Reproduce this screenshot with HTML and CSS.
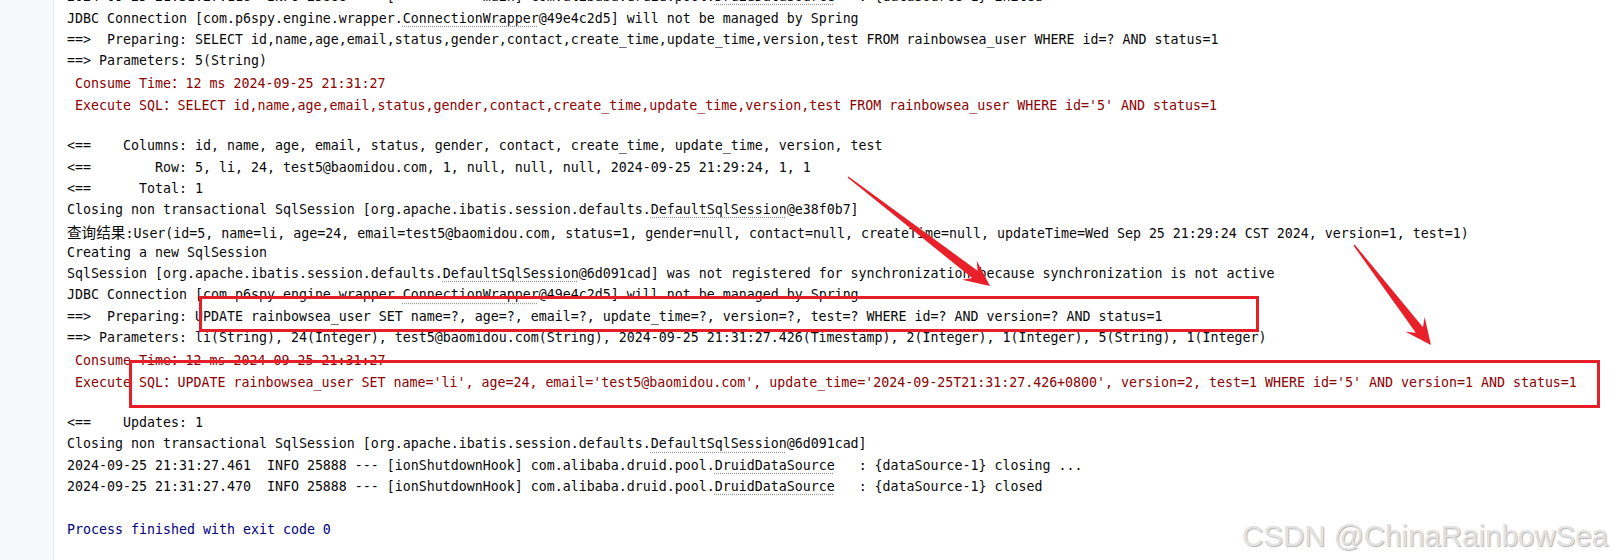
FILE: index.html
```html
<html>
  <head>
    <meta charset="utf-8" />
    <link rel="stylesheet" href="styles.css">
  </head>
  <body>
    <div class="page">
      <div class="gutter"></div>

      <div class="console">
        <div class="line">2024-09-25 21:31:27.118  INFO 25888 --- [           main] com.alibaba.druid.pool.<span class="link">DruidDataSource</span>   : {dataSource-1} inited</div>
        <div class="line">JDBC Connection [com.p6spy.engine.wrapper.<span class="link">ConnectionWrapper</span>@49e4c2d5] will not be managed by Spring</div>
        <div class="line">==>  Preparing: SELECT id,name,age,email,status,gender,contact,create_time,update_time,version,test FROM rainbowsea_user WHERE id=? AND status=1</div>
        <div class="line">==> Parameters: 5(String)</div>
        <div class="line err"> Consume Time<span class="cjk">：</span>12 ms 2024-09-25 21:31:27</div>
        <div class="line err"> Execute SQL<span class="cjk">：</span>SELECT id,name,age,email,status,gender,contact,create_time,update_time,version,test FROM rainbowsea_user WHERE id='5' AND status=1</div>
        <div class="line"> </div>
        <div class="line">&lt;==    Columns: id, name, age, email, status, gender, contact, create_time, update_time, version, test</div>
        <div class="line">&lt;==        Row: 5, li, 24, test5@baomidou.com, 1, null, null, null, 2024-09-25 21:29:24, 1, 1</div>
        <div class="line">&lt;==      Total: 1</div>
        <div class="line">Closing non transactional SqlSession [org.apache.ibatis.session.defaults.<span class="link">DefaultSqlSession</span>@e38f0b7]</div>
        <div class="line"><span class="cjk">查询结果</span>:User(id=5, name=li, age=24, email=test5@baomidou.com, status=1, gender=null, contact=null, createTime=null, updateTime=Wed Sep 25 21:29:24 CST 2024, version=1, test=1)</div>
        <div class="line">Creating a new SqlSession</div>
        <div class="line">SqlSession [org.apache.ibatis.session.defaults.<span class="link">DefaultSqlSession</span>@6d091cad] was not registered for synchronization because synchronization is not active</div>
        <div class="line">JDBC Connection [com.p6spy.engine.wrapper.<span class="link">ConnectionWrapper</span>@49e4c2d5] will not be managed by Spring</div>
        <div class="line">==>  Preparing: UPDATE rainbowsea_user SET name=?, age=?, email=?, update_time=?, version=?, test=? WHERE id=? AND version=? AND status=1</div>
        <div class="line">==> Parameters: li(String), 24(Integer), test5@baomidou.com(String), 2024-09-25 21:31:27.426(Timestamp), 2(Integer), 1(Integer), 5(String), 1(Integer)</div>
        <div class="line err"> Consume Time<span class="cjk">：</span>12 ms 2024-09-25 21:31:27</div>
        <div class="line err"> Execute SQL<span class="cjk">：</span>UPDATE rainbowsea_user SET name='li', age=24, email='test5@baomidou.com', update_time='2024-09-25T21:31:27.426+0800', version=2, test=1 WHERE id='5' AND version=1 AND status=1</div>
        <div class="line"> </div>
        <div class="line">&lt;==    Updates: 1</div>
        <div class="line">Closing non transactional SqlSession [org.apache.ibatis.session.defaults.<span class="link">DefaultSqlSession</span>@6d091cad]</div>
        <div class="line">2024-09-25 21:31:27.461  INFO 25888 --- [ionShutdownHook] com.alibaba.druid.pool.<span class="link">DruidDataSource</span>   : {dataSource-1} closing ...</div>
        <div class="line">2024-09-25 21:31:27.470  INFO 25888 --- [ionShutdownHook] com.alibaba.druid.pool.<span class="link">DruidDataSource</span>   : {dataSource-1} closed</div>
        <div class="line"> </div>
        <div class="line sys">Process finished with exit code 0</div>
      </div>
    </div>

    <!-- red marks drawn over the screenshot -->
    <svg class="marks" width="1612" height="560" viewBox="0 0 1612 560">
      <rect x="200.5" y="297.5" width="1057" height="33" />
      <rect x="130.5" y="361.5" width="1468" height="45" />
      <polygon class="arrow" points="847.5,177.6 972.2,278 962.1,279.7 990,286 976.7,260.7 977.6,270.8 848.5,176.4" />
      <polygon class="arrow" points="1353.4,245.5 1415.8,332.7 1405.6,331.7 1431,345 1424.6,317.1 1423,327.2 1354.6,244.5" />
    </svg>

    <div class="watermark">CSDN @ChinaRainbowSea</div>
  </body>
</html>
```

FILE: styles.css
```css
body {
  margin: 0;
  background-color: #fff;
  position: relative;
  overflow: hidden;
}

.page {
  display: flex;
  height: 560px;
  overflow: hidden;
}

.gutter {
  width: 53px;
  flex-shrink: 0;
  background-color: #f7f8fa;
  border-right: 1px solid #e8eaee;
}

.console {
  margin-top: -13.75px;
  padding-left: 13px;
  font-family: "DejaVu Sans Mono", "Liberation Mono", monospace;
  font-size: 13.29px;
  line-height: 21.3px;
  color: #080808;
}

.line {
  white-space: pre;
  height: 21.3px;
}

.err {
  color: #8a0000;
}

.sys {
  color: #000080;
}

.cjk {
  font-family: "Noto Sans CJK SC", sans-serif;
  font-size: 14.6px;
}

.link {
  text-decoration: underline dotted #9a9a9a;
  text-underline-offset: 3px;
}

.marks {
  position: absolute;
  left: 0;
  top: 0;
  pointer-events: none;
}

.marks rect {
  fill: none;
  stroke: #e61e27;
  stroke-width: 3;
}

.marks .arrow {
  fill: #e8202a;
}

.watermark {
  position: absolute;
  right: 4px;
  top: 521px;
  font-family: "Liberation Sans", Arial, sans-serif;
  font-size: 29.5px;
  line-height: 29.5px;
  color: #e2e2e2;
  text-shadow: 1px 1px 1px #b5b5b5;
}
```
